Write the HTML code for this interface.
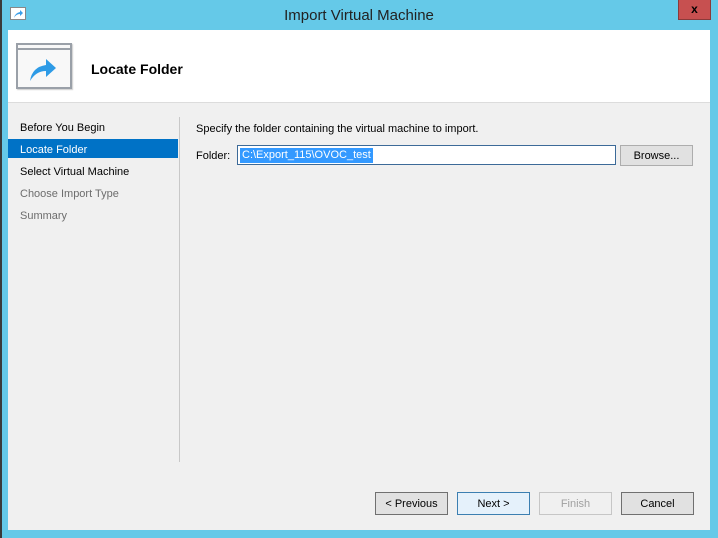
<!DOCTYPE html>
<html><head><style>
*{margin:0;padding:0;box-sizing:border-box}
body{width:718px;height:538px;background:#65c9e8;font-family:"Liberation Sans",sans-serif;font-size:11px;position:relative;overflow:hidden;color:#000}
.a{position:absolute}
.btn{position:absolute;top:492px;width:73px;height:23px;background:#e1e1e1;border:1px solid #adadad;text-align:center;line-height:22px;font-size:11px}
.nav{position:absolute;left:20px;font-size:11px}
</style></head><body>
<div class="a" style="left:0;top:0;width:2px;height:538px;background:#3a3a3a"></div>
<div class="a" style="left:10px;top:7px;width:16px;height:13px;border:1px solid #888;background:#fff"><svg width="14" height="11" viewBox="0 0 14 11"><path d="M3 10 Q4 5 9 4 L9 2 L12 5 L9 8 L9 6 Q5 6 3 10Z" fill="#3a9ee8"/></svg></div>
<div class="a" style="left:0;top:7px;width:718px;text-align:center;font-size:15px;color:#222">Import Virtual Machine</div>
<div class="a" style="left:678px;top:0;width:33px;height:20px;background:#c75050;border:1px solid #8a3a3a;border-top:none;color:#000;text-align:center;font-weight:bold;font-size:12px;line-height:18px">x</div>
<div class="a" style="left:8px;top:30px;width:702px;height:500px;background:#f0f0f0"></div>
<div class="a" style="left:8px;top:30px;width:702px;height:73px;background:#fff;border-bottom:1px solid #dcdcdc"></div>
<div class="a" style="left:16px;top:43px;width:56px;height:46px;border:2px solid #9aa0a8;background:#f8f8f8;box-shadow:1px 1px 1px #ccc">
<div style="height:5px;border-bottom:2px solid #9aa0a8"></div>
<svg class="a" style="left:8px;top:10px" width="36" height="28" viewBox="0 0 36 28"><path d="M4 26 Q6 12 20 10 L20 4 L30 13 L20 22 L20 16 Q10 16 4 26Z" fill="#2e9be6"/></svg></div>
<div class="a" style="left:91px;top:61px;font-size:14px;font-weight:bold">Locate Folder</div>
<div class="a" style="left:179px;top:117px;width:1px;height:345px;background:#c8c8c8"></div>
<div class="nav" style="top:122px">Before You Begin</div>
<div class="a" style="left:8px;top:139px;width:170px;height:19px;background:#0072c6"></div>
<div class="nav" style="top:144px;color:#fff">Locate Folder</div>
<div class="nav" style="top:166px">Select Virtual Machine</div>
<div class="nav" style="top:188px;color:#6d6d6d">Choose Import Type</div>
<div class="nav" style="top:210px;color:#6d6d6d">Summary</div>
<div class="a" style="left:196px;top:123px">Specify the folder containing the virtual machine to import.</div>
<div class="a" style="left:196px;top:150px">Folder:</div>
<div class="a" style="left:237px;top:145px;width:379px;height:20px;border:1px solid #3c6a98;background:#fff"><span style="position:absolute;left:2px;top:2px;background:#3399ff;color:#fff;padding:1px 2px;line-height:13px">C:\Export_115\OVOC_test</span></div>
<div class="btn" style="left:620px;top:145px;height:21px;line-height:20px">Browse...</div>
<div class="btn" style="left:375px;border-color:#707070">&lt; Previous</div>
<div class="btn" style="left:457px;border-color:#3c7fb1;background:#e5f1fb">Next &gt;</div>
<div class="btn" style="left:539px;background:#f0f0f0;border-color:#c6c6c6;color:#a0a0a0">Finish</div>
<div class="btn" style="left:621px;border-color:#707070">Cancel</div>
</body></html>
